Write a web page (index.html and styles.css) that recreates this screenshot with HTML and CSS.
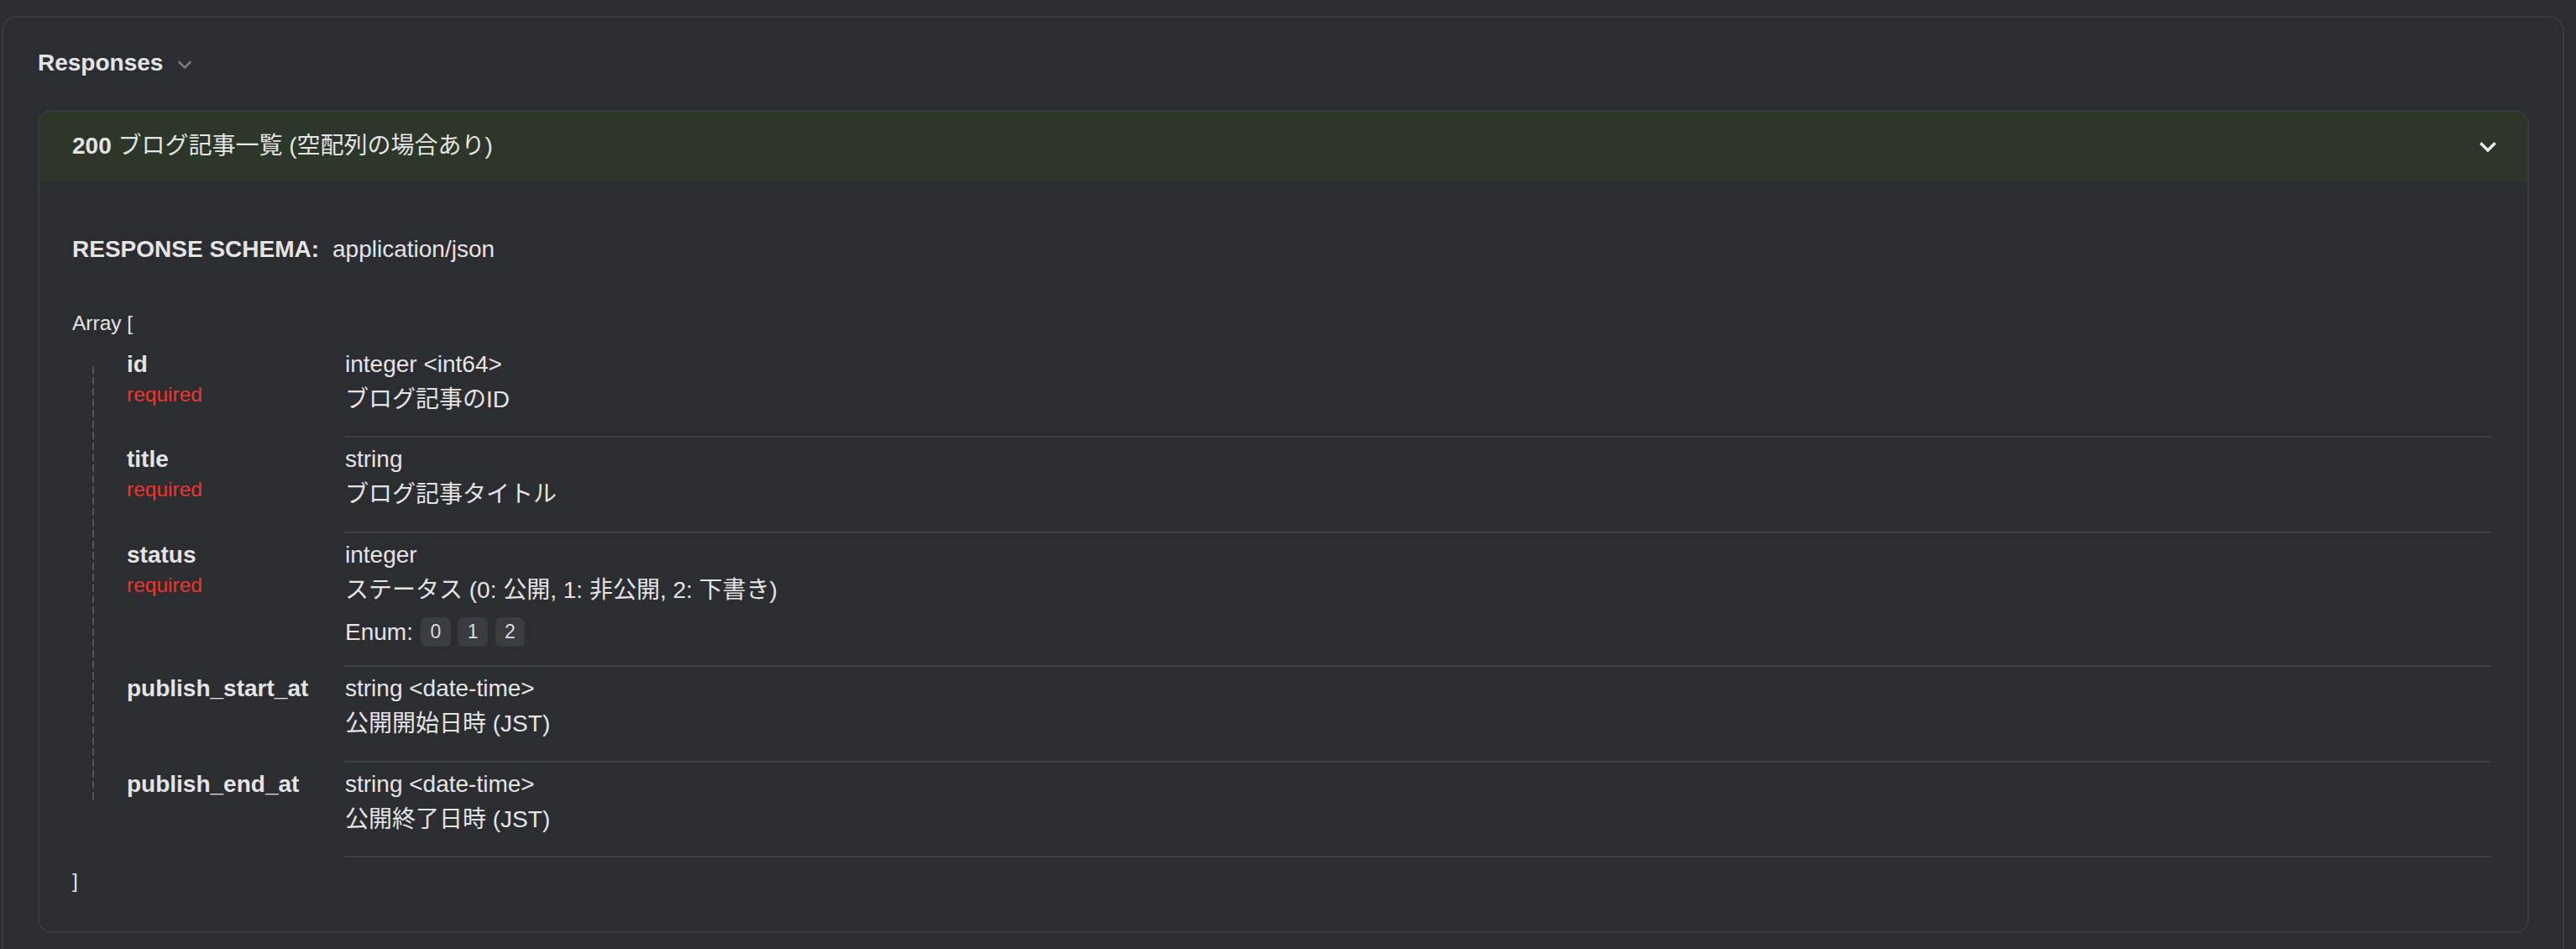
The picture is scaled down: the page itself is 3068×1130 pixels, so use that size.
FILE: index.html
```html
<!DOCTYPE html>
<html lang="ja">
<head>
<meta charset="utf-8">
<title>Responses</title>
<link rel="stylesheet" href="styles.css">
</head>
<body>
<div class="page">
  <section class="outer-card">
    <h2 class="responses-title">Responses
      <svg class="title-chevron" width="18" height="11" viewBox="0 0 18 11"><path d="M2.5 2 L9 8.5 L15.5 2" fill="none" stroke="#77787c" stroke-width="2.8" stroke-linecap="round" stroke-linejoin="round"/></svg>
    </h2>
    <div class="response-card">
      <div class="response-head">
        <div class="response-label"><strong>200</strong> ブログ記事一覧 (空配列の場合あり)</div>
        <svg class="head-chevron" width="20" height="13" viewBox="0 0 20 13"><path d="M2.5 2.5 L10 10 L17.5 2.5" fill="none" stroke="#eeeeee" stroke-width="3.4" stroke-linecap="square"/></svg>
      </div>
      <div class="response-body">
        <div class="schema-line"><strong>RESPONSE SCHEMA:</strong><span class="mime">application/json</span></div>
        <div class="bracket open">Array [</div>
        <div class="props">
          <div class="prop">
            <div class="prop-name"><div class="name">id</div><div class="required">required</div></div>
            <div class="prop-detail"><div class="type">integer &lt;int64&gt;</div><div class="desc">ブログ記事のID</div></div>
          </div>
          <div class="prop">
            <div class="prop-name"><div class="name">title</div><div class="required">required</div></div>
            <div class="prop-detail"><div class="type">string</div><div class="desc">ブログ記事タイトル</div></div>
          </div>
          <div class="prop">
            <div class="prop-name"><div class="name">status</div><div class="required">required</div></div>
            <div class="prop-detail">
              <div class="type">integer</div>
              <div class="desc">ステータス (0: 公開, 1: 非公開, 2: 下書き)</div>
              <div class="enum"><span class="enum-label">Enum:</span><span class="badge">0</span><span class="badge">1</span><span class="badge">2</span></div>
            </div>
          </div>
          <div class="prop">
            <div class="prop-name"><div class="name">publish_start_at</div></div>
            <div class="prop-detail"><div class="type">string &lt;date-time&gt;</div><div class="desc">公開開始日時 (JST)</div></div>
          </div>
          <div class="prop">
            <div class="prop-name"><div class="name">publish_end_at</div></div>
            <div class="prop-detail"><div class="type">string &lt;date-time&gt;</div><div class="desc">公開終了日時 (JST)</div></div>
          </div>
        </div>
        <div class="bracket close">]</div>
      </div>
    </div>
  </section>
</div>
</body>
</html>
```

FILE: styles.css
```css
* { box-sizing: border-box; }
html, body {
  margin: 0;
  padding: 0;
  background: #2c2d31;
}
body {
  font-family: "Liberation Sans", "Noto Sans CJK JP", sans-serif;
  color: #e4e4e6;
  font-size: 28px;
  line-height: 42px;
}
.page {
  padding: 19px 14px 0 2px;
  height: 1130px;
  overflow: hidden;
}
.outer-card {
  border: 2px solid #3b3c40;
  border-bottom: none;
  border-radius: 18px 18px 0 0;
  padding: 33px 40px 40px 41px;
  min-height: 1200px;
}
.responses-title {
  margin: 0;
  font-size: 28px;
  line-height: 42px;
  font-weight: 700;
  display: flex;
  align-items: center;
  gap: 17px;
}
.title-chevron { margin-top: 4px; }
.response-card {
  margin-top: 35px;
  border: 2px solid #3a3b3f;
  border-radius: 16px;
  overflow: hidden;
}
.response-head {
  height: 84px;
  background: #2c3629;
  display: flex;
  align-items: center;
  justify-content: space-between;
  padding: 0 37px 0 39px;
}
.response-label { margin-top: -2px; }
.response-label strong { font-weight: 700; }
.response-body {
  padding: 59px 43px 41px 39px;
}
.schema-line strong { font-weight: 700; }
.mime { margin-left: 16px; }
.bracket {
  font-size: 24.5px;
  line-height: 36.75px;
}
.bracket.open { margin-top: 49px; margin-bottom: 4px; }
.bracket.close { margin-top: 10px; }
.props {
  position: relative;
  padding-left: 65px;
}
.props::before {
  content: "";
  position: absolute;
  left: 24px;
  top: 28px;
  bottom: 67px;
  width: 2px;
  background: repeating-linear-gradient(to bottom, #545559 0 9px, transparent 9px 13px);
}
.prop {
  display: grid;
  grid-template-columns: 260px 1fr;
}
.prop-name { padding-top: 5px; }
.name { font-weight: 700; }
.required {
  color: #f0352b;
  font-size: 24.5px;
  line-height: 29px;
}
.prop-detail {
  padding: 5px 0 22.5px;
  border-bottom: 2px solid #414246;
}
.enum {
  margin-top: 11px;
  display: flex;
  align-items: center;
  height: 35px;
  line-height: 35px;
}
.enum-label { margin-right: 9px; }
.badge {
  display: inline-block;
  height: 35px;
  line-height: 35px;
  padding: 0 11.5px;
  margin-right: 8.5px;
  background: #3b3c40;
  border-radius: 7px;
  font-size: 23px;
  color: #dcdcde;
}
```
